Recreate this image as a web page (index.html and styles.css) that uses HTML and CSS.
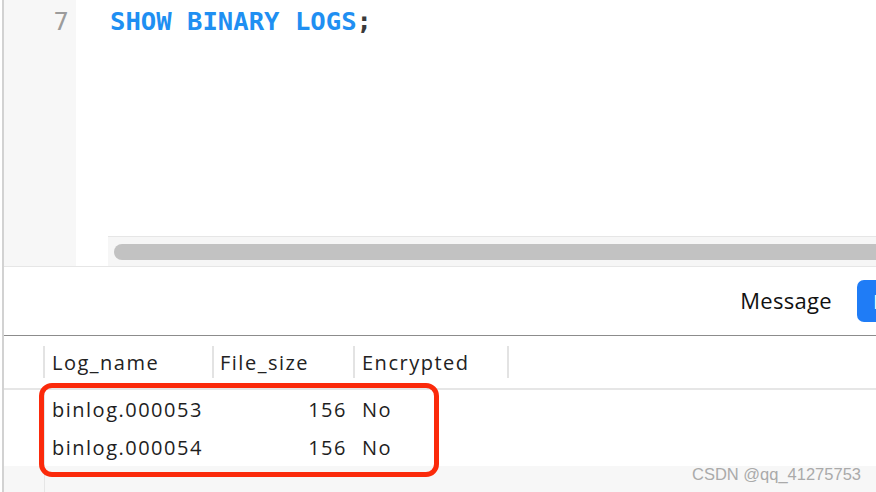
FILE: index.html
```html
<!DOCTYPE html>
<html>
<head>
<meta charset="utf-8">
<link rel="stylesheet" href="styles.css">
</head>
<body>
<div class="app">
  <section class="editor">
    <div class="gutter"><div class="ln">7</div></div>
    <div class="main">
      <div class="code"><span class="kw">SHOW BINARY LOGS</span><span class="punct">;</span></div>
      <div class="hscroll"><div class="thumb"></div></div>
    </div>
  </section>
  <section class="results">
    <div class="toolbar">
      <span class="tab">Message</span>
      <button class="btn">Result 1</button>
    </div>
    <div class="thead">
      <div class="th rn"></div>
      <div class="th">Log_name</div>
      <div class="th">File_size</div>
      <div class="th">Encrypted</div>
      <div class="th-rest"></div>
    </div>
    <div class="row">
      <div class="td rn"></div>
      <div class="td">binlog.000053</div>
      <div class="td num">156</div>
      <div class="td">No</div>
      <div class="td-rest"></div>
    </div>
    <div class="row">
      <div class="td rn"></div>
      <div class="td">binlog.000054</div>
      <div class="td num">156</div>
      <div class="td">No</div>
      <div class="td-rest"></div>
    </div>
    <div class="filler">
      <div class="td rn"></div>
    </div>
  </section>
  <div class="highlight"></div>
  <div class="watermark">CSDN @qq_41275753</div>
</div>
</body>
</html>
```
FILE: styles.css
```css
html, body {
  margin: 0;
  padding: 0;
  background: #ffffff;
}
body {
  width: 876px;
  height: 492px;
  overflow: hidden;
}
.app {
  position: relative;
  margin-left: 2px;
  border-left: 2px solid #d2d2d2;
  height: 492px;
  overflow: hidden;
  display: flex;
  flex-direction: column;
}

/* editor */
.editor {
  height: 266px;
  border-bottom: 1px solid #e6e6e6;
  display: flex;
  flex-shrink: 0;
}
.gutter {
  width: 72px;
  background: #f7f7f7;
  flex-shrink: 0;
}
.ln {
  font-family: "DejaVu Sans Mono", monospace;
  font-size: 25.6px;
  line-height: 32px;
  padding-top: 5px;
  padding-right: 7px;
  text-align: right;
  color: #9c9c9c;
}
.main {
  flex: 1;
  display: flex;
  flex-direction: column;
  min-width: 0;
}
.code {
  flex: 1;
  padding-top: 5px;
  padding-left: 34px;
  font-family: "DejaVu Sans Mono", monospace;
  font-size: 25.6px;
  line-height: 32px;
  font-weight: bold;
  white-space: pre;
}
.kw { color: #1f8ff2; }
.punct { color: #3a3a3a; }
.hscroll {
  height: 29px;
  margin-left: 32px;
  border-top: 1px solid #e6e6e6;
  background: #f6f6f6;
  display: flex;
}
.thumb {
  margin-top: 7px;
  margin-left: 6px;
  margin-right: -20px;
  flex: 1;
  height: 16px;
  border-radius: 8px;
  background: #c2c2c2;
}

/* results */
.results {
  flex: 1;
  display: flex;
  flex-direction: column;
  font-family: "Open Sans", sans-serif;
  font-size: 20px;
  letter-spacing: 1.5px;
  color: #1e1e1e;
}
.toolbar {
  height: 68px;
  border-bottom: 1px solid #8c8c8c;
  display: flex;
  align-items: center;
  justify-content: flex-end;
  margin-right: -81px;
  flex-shrink: 0;
}
.tab {
  font-size: 22px;
  letter-spacing: 0.3px;
  color: #111;
  margin-bottom: 2px;
}
.btn {
  margin-left: 25px;
  width: 100px;
  height: 42px;
  border: none;
  border-radius: 7px;
  background: #1f7cf6;
  color: #ffffff;
  font-family: "Open Sans", sans-serif;
  font-size: 20px;
  text-align: left;
  padding: 0 0 0 16px;
}
.thead {
  height: 52px;
  border-bottom: 2px solid #e6e6e6;
  display: grid;
  grid-template-columns: 41px 169px 141px 154px 1fr;
  align-items: center;
  flex-shrink: 0;
}
.th {
  height: 32px;
  line-height: 32px;
  border-right: 2px solid #e3e3e3;
  padding-left: 7px;
  padding-top: 1px;
  box-sizing: border-box;
  white-space: nowrap;
  color: #222;
}
.th:nth-child(3) { padding-left: 6px; }
.th.rn { padding-left: 0; }
.row {
  height: 38px;
  display: grid;
  grid-template-columns: 41px 169px 141px 154px 1fr;
  flex-shrink: 0;
}
.td {
  line-height: 38px;
  padding-left: 7px;
  padding-top: 1px;
  white-space: nowrap;
  box-sizing: border-box;
}
.td.rn {
  padding-left: 0;
  border-right: 1px solid #e6e6e6;
}
.td.num {
  text-align: right;
  padding-left: 0;
  padding-right: 8px;
  letter-spacing: 1.5px;
}
.filler {
  flex: 1;
  background: #f7f7f7;
  display: grid;
  grid-template-columns: 41px 1fr;
}

/* overlays */
.highlight {
  position: absolute;
  left: 35px;
  top: 383px;
  width: 400px;
  height: 94px;
  box-sizing: border-box;
  border: 5px solid #fb2a0b;
  border-radius: 13px;
}
.watermark {
  position: absolute;
  right: 15px;
  top: 465px;
  font-family: "Liberation Sans", sans-serif;
  font-size: 16.5px;
  color: #aaaaaa;
  white-space: nowrap;
}
```
